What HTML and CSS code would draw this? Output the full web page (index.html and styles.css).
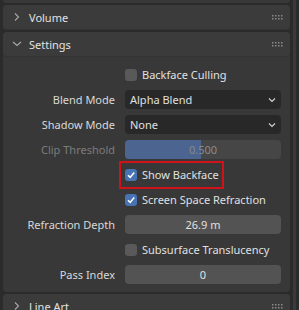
FILE: index.html
```html
<!DOCTYPE html>
<html lang="en">
<head>
  <meta charset="UTF-8" />
  <title>Material Settings</title>
  <link rel="stylesheet" href="styles.css">
</head>
<body>
  <div class="region">
    <div class="panels">
      <div class="panel-stub"></div>

      <div class="panel closed">
        <div class="panel-header">
          <svg class="chevron" width="10" height="10" viewBox="0 0 10 10"><polyline points="3,1.5 6.5,5 3,8.5" /></svg>
          <span class="panel-title">Volume</span>
          <svg class="grip" width="12" height="5" viewBox="0 0 12 5">
            <rect x="0" y="0" width="1.5" height="1.5" /><rect x="3" y="0" width="1.5" height="1.5" /><rect x="6" y="0" width="1.5" height="1.5" /><rect x="9" y="0" width="1.5" height="1.5" />
            <rect x="0" y="3" width="1.5" height="1.5" /><rect x="3" y="3" width="1.5" height="1.5" /><rect x="6" y="3" width="1.5" height="1.5" /><rect x="9" y="3" width="1.5" height="1.5" />
          </svg>
        </div>
      </div>

      <div class="panel">
        <div class="panel-header">
          <svg class="chevron" width="10" height="10" viewBox="0 0 10 10"><polyline points="1,3 5,6.5 9,3" /></svg>
          <span class="panel-title">Settings</span>
          <svg class="grip" width="12" height="5" viewBox="0 0 12 5">
            <rect x="0" y="0" width="1.5" height="1.5" /><rect x="3" y="0" width="1.5" height="1.5" /><rect x="6" y="0" width="1.5" height="1.5" /><rect x="9" y="0" width="1.5" height="1.5" />
            <rect x="0" y="3" width="1.5" height="1.5" /><rect x="3" y="3" width="1.5" height="1.5" /><rect x="6" y="3" width="1.5" height="1.5" /><rect x="9" y="3" width="1.5" height="1.5" />
          </svg>
        </div>
        <div class="panel-body">
          <div class="row">
            <span class="label"></span>
            <div class="control"><span class="checkbox"></span><span class="check-label">Backface Culling</span></div>
          </div>
          <div class="row">
            <span class="label">Blend Mode</span>
            <div class="control"><div class="dropdown"><span>Alpha Blend</span><svg class="caret" width="8" height="6" viewBox="0 0 8 6"><polyline points="1,1.5 4,4.5 7,1.5" /></svg></div></div>
          </div>
          <div class="row">
            <span class="label">Shadow Mode</span>
            <div class="control"><div class="dropdown"><span>None</span><svg class="caret" width="8" height="6" viewBox="0 0 8 6"><polyline points="1,1.5 4,4.5 7,1.5" /></svg></div></div>
          </div>
          <div class="row disabled">
            <span class="label">Clip Threshold</span>
            <div class="control"><div class="slider"><div class="slider-fill" style="width: 49%"></div><span class="slider-value">0.500</span></div></div>
          </div>
          <div class="row">
            <span class="label"></span>
            <div class="control highlighted"><span class="checkbox checked"><svg width="10" height="10" viewBox="0 0 10 10"><polyline points="2,5.2 4.2,7.4 8.2,2.6" /></svg></span><span class="check-label">Show Backface</span><span class="red-box"></span></div>
          </div>
          <div class="row">
            <span class="label"></span>
            <div class="control"><span class="checkbox checked"><svg width="10" height="10" viewBox="0 0 10 10"><polyline points="2,5.2 4.2,7.4 8.2,2.6" /></svg></span><span class="check-label">Screen Space Refraction</span></div>
          </div>
          <div class="row">
            <span class="label">Refraction Depth</span>
            <div class="control"><div class="number">26.9 m</div></div>
          </div>
          <div class="row">
            <span class="label"></span>
            <div class="control"><span class="checkbox"></span><span class="check-label">Subsurface Translucency</span></div>
          </div>
          <div class="row">
            <span class="label">Pass Index</span>
            <div class="control"><div class="number">0</div></div>
          </div>
        </div>
      </div>

      <div class="panel closed">
        <div class="panel-header">
          <svg class="chevron" width="10" height="10" viewBox="0 0 10 10"><polyline points="3,1.5 6.5,5 3,8.5" /></svg>
          <span class="panel-title">Line Art</span>
          <svg class="grip" width="12" height="5" viewBox="0 0 12 5">
            <rect x="0" y="0" width="1.5" height="1.5" /><rect x="3" y="0" width="1.5" height="1.5" /><rect x="6" y="0" width="1.5" height="1.5" /><rect x="9" y="0" width="1.5" height="1.5" />
            <rect x="0" y="3" width="1.5" height="1.5" /><rect x="3" y="3" width="1.5" height="1.5" /><rect x="6" y="3" width="1.5" height="1.5" /><rect x="9" y="3" width="1.5" height="1.5" />
          </svg>
        </div>
      </div>
    </div>
    <div class="scrollbar"><div class="scroll-line"></div></div>
  </div>
</body>
</html>
```

FILE: styles.css
```css
* {
  margin: 0;
  padding: 0;
  box-sizing: border-box;
}
body {
  font-family: 'Noto Sans', sans-serif;
  font-size: 11px;
  color: #dcdcdc;
  background: #2b2b2b;
  width: 299px;
  height: 310px;
  overflow: hidden;
}
.region {
  display: flex;
  height: 100%;
}
.panels {
  width: 290px;
  padding-left: 3px;
  display: flex;
  flex-direction: column;
  gap: 2px;
}
.panels > * {
  flex-shrink: 0;
}
.panel-stub {
  height: 3px;
  background: #383838;
  border-radius: 0 0 4px 4px;
}
.panel {
  background: #383838;
  border-radius: 4px;
}
.panel-header {
  height: 25px;
  display: flex;
  align-items: center;
  padding-left: 9px;
  padding-right: 6px;
  background: #3b3b3b;
  border-radius: 4px;
}
.panel .panel-header {
  border-bottom: 1px solid #333;
}
.chevron {
  fill: none;
  stroke: #a8a8a8;
  stroke-width: 1.1;
}
.panel-title {
  margin-left: 7px;
  flex: 1;
  color: #e2e2e2;
}
.grip rect {
  fill: #8a8a8a;
}
.panel-body {
  padding: 5px 9px 5px 8px;
}
.row {
  height: 25px;
  display: grid;
  grid-template-columns: 104px 156px;
  column-gap: 10px;
  align-items: center;
}
.label {
  text-align: right;
  color: #d8d8d8;
}
.control {
  display: flex;
  align-items: center;
  height: 19px;
}
.highlighted {
  position: relative;
}
.red-box {
  position: absolute;
  left: -6px;
  top: -4px;
  width: 105px;
  height: 28px;
  border: 2px solid #d0121b;
}
.checkbox {
  width: 12px;
  height: 12px;
  border-radius: 3px;
  background: #595959;
  display: flex;
  align-items: center;
  justify-content: center;
}
.checkbox.checked {
  background: #4772b3;
}
.checkbox svg {
  fill: none;
  stroke: #fff;
  stroke-width: 1.6;
}
.check-label {
  margin-left: 5px;
  color: #e0e0e0;
}
.dropdown {
  width: 100%;
  height: 19px;
  background: #282828;
  border-radius: 4px;
  display: flex;
  align-items: center;
  justify-content: space-between;
  padding: 0 5px 0 5px;
  color: #e0e0e0;
}
.caret {
  fill: none;
  stroke: #cfcfcf;
  stroke-width: 1.2;
}
.slider {
  position: relative;
  width: 100%;
  height: 19px;
  background: #464646;
  border-radius: 4px;
  overflow: hidden;
  display: flex;
  align-items: center;
  justify-content: center;
}
.slider-fill {
  position: absolute;
  left: 0;
  top: 0;
  bottom: 0;
  background: #4b6590;
}
.slider-value {
  position: relative;
  color: #8a8a8a;
}
.disabled .label {
  color: #7c7c7c;
}
.number {
  width: 100%;
  height: 19px;
  background: #535353;
  border-radius: 4px;
  display: flex;
  align-items: center;
  justify-content: center;
  color: #e0e0e0;
}
.scrollbar {
  width: 9px;
  padding-left: 3px;
}
.scroll-line {
  width: 3px;
  height: 100%;
  background: #3a3a3a;
}
```
